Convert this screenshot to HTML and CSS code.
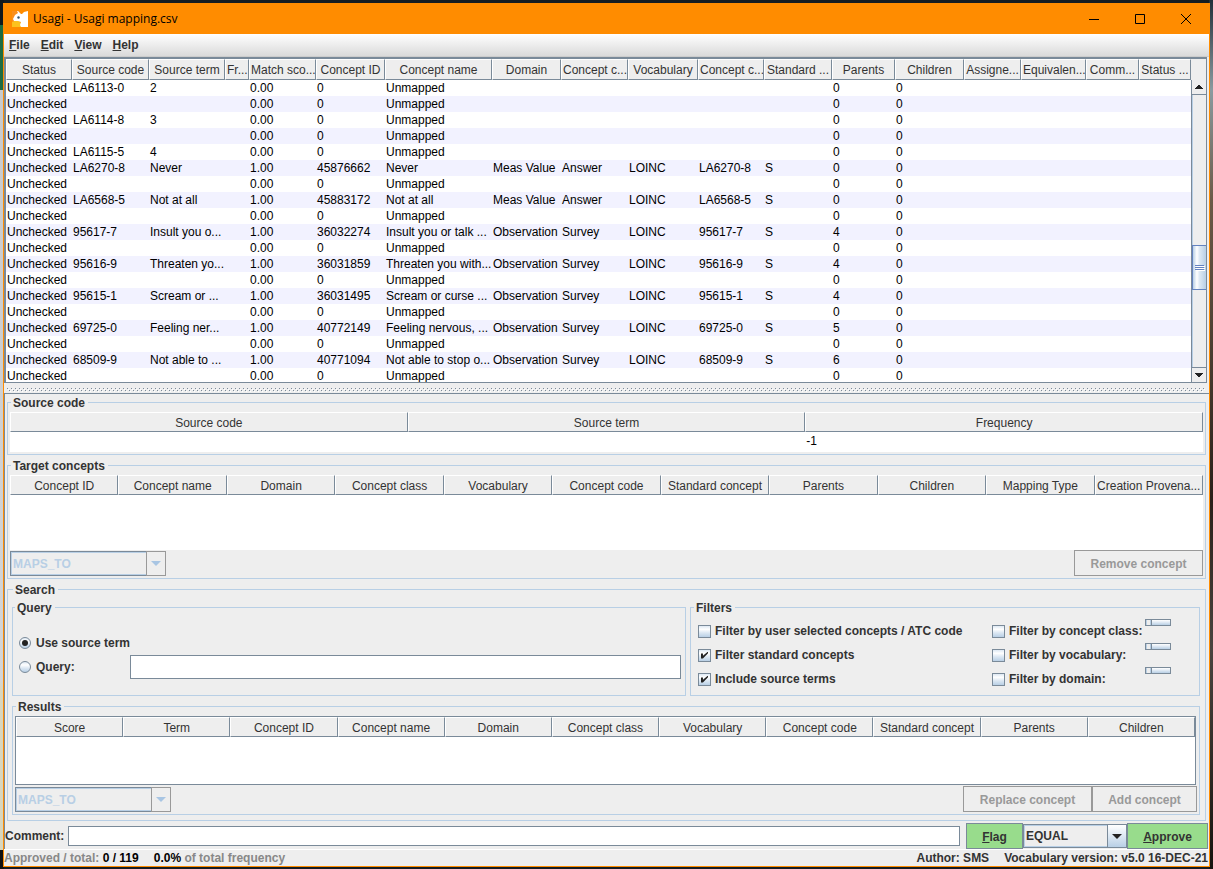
FILE: index.html
```html
<!DOCTYPE html>
<html lang="en">
<head>
    <meta charset="UTF-8">
    <meta name="viewport" content="width=device-width, initial-scale=1.0">
    <title>Usagi - Usagi mapping.csv</title>
    <link rel="stylesheet" href="styles.css">
</head>
<body>

<div class="window">
    <header class="titlebar">
        <svg class="logo" width="16" height="16" viewBox="0 0 16 16">
            <path d="M0 0h7l3 4v12H0z" fill="#f98f1c"/>
            <path d="M0 11l5-2 4 3 1 4H0z" fill="#fcc21e"/>
            <path d="M5 0l1 0 3 3 1 0 2-2 4-1v16H9l-1-2 1-3-3-1-4 0-1-2 2-4 3-2z" fill="#fff"/>
            <circle cx="6.5" cy="6.5" r="1.2" fill="#35566e"/>
        </svg>
        <h1>Usagi - Usagi mapping.csv</h1>
        <div class="window-buttons">
            <button aria-label="Minimize"><svg width="10" height="10" viewBox="0 0 10 10"><path d="M0 5.5h10"/></svg></button>
            <button aria-label="Maximize"><svg width="10" height="10" viewBox="0 0 10 10"><path d="M.5.5h9v9h-9z"/></svg></button>
            <button aria-label="Close"><svg width="10" height="10" viewBox="0 0 10 10"><path d="M0 0l10 10M10 0L0 10"/></svg></button>
        </div>
    </header>

    <nav class="menubar">
        <button><u>F</u>ile</button>
        <button><u>E</u>dit</button>
        <button><u>V</u>iew</button>
        <button><u>H</u>elp</button>
    </nav>

    <div class="overview">
        <table class="codes">
            <thead>
                <tr>
                    <th>Status</th><th>Source code</th><th>Source term</th><th>Fr...</th><th>Match sco...</th><th>Concept ID</th>
                    <th>Concept name</th><th>Domain</th><th>Concept c...</th><th>Vocabulary</th><th>Concept c...</th><th>Standard ...</th>
                    <th>Parents</th><th>Children</th><th>Assigne...</th><th>Equivalen...</th><th>Comm...</th><th>Status ...</th>
                </tr>
            </thead>
            <tbody>
                <tr><td>Unchecked</td><td>LA6113-0</td><td>2</td><td></td><td>0.00</td><td>0</td><td>Unmapped</td><td></td><td></td><td></td><td></td><td></td><td>0</td><td>0</td><td colspan="4"></td></tr>
                <tr><td>Unchecked</td><td></td><td></td><td></td><td>0.00</td><td>0</td><td>Unmapped</td><td></td><td></td><td></td><td></td><td></td><td>0</td><td>0</td><td colspan="4"></td></tr>
                <tr><td>Unchecked</td><td>LA6114-8</td><td>3</td><td></td><td>0.00</td><td>0</td><td>Unmapped</td><td></td><td></td><td></td><td></td><td></td><td>0</td><td>0</td><td colspan="4"></td></tr>
                <tr><td>Unchecked</td><td></td><td></td><td></td><td>0.00</td><td>0</td><td>Unmapped</td><td></td><td></td><td></td><td></td><td></td><td>0</td><td>0</td><td colspan="4"></td></tr>
                <tr><td>Unchecked</td><td>LA6115-5</td><td>4</td><td></td><td>0.00</td><td>0</td><td>Unmapped</td><td></td><td></td><td></td><td></td><td></td><td>0</td><td>0</td><td colspan="4"></td></tr>
                <tr><td>Unchecked</td><td>LA6270-8</td><td>Never</td><td></td><td>1.00</td><td>45876662</td><td>Never</td><td>Meas Value</td><td>Answer</td><td>LOINC</td><td>LA6270-8</td><td>S</td><td>0</td><td>0</td><td colspan="4"></td></tr>
                <tr><td>Unchecked</td><td></td><td></td><td></td><td>0.00</td><td>0</td><td>Unmapped</td><td></td><td></td><td></td><td></td><td></td><td>0</td><td>0</td><td colspan="4"></td></tr>
                <tr><td>Unchecked</td><td>LA6568-5</td><td>Not at all</td><td></td><td>1.00</td><td>45883172</td><td>Not at all</td><td>Meas Value</td><td>Answer</td><td>LOINC</td><td>LA6568-5</td><td>S</td><td>0</td><td>0</td><td colspan="4"></td></tr>
                <tr><td>Unchecked</td><td></td><td></td><td></td><td>0.00</td><td>0</td><td>Unmapped</td><td></td><td></td><td></td><td></td><td></td><td>0</td><td>0</td><td colspan="4"></td></tr>
                <tr><td>Unchecked</td><td>95617-7</td><td>Insult you o...</td><td></td><td>1.00</td><td>36032274</td><td>Insult you or talk ...</td><td>Observation</td><td>Survey</td><td>LOINC</td><td>95617-7</td><td>S</td><td>4</td><td>0</td><td colspan="4"></td></tr>
                <tr><td>Unchecked</td><td></td><td></td><td></td><td>0.00</td><td>0</td><td>Unmapped</td><td></td><td></td><td></td><td></td><td></td><td>0</td><td>0</td><td colspan="4"></td></tr>
                <tr><td>Unchecked</td><td>95616-9</td><td>Threaten yo...</td><td></td><td>1.00</td><td>36031859</td><td>Threaten you with...</td><td>Observation</td><td>Survey</td><td>LOINC</td><td>95616-9</td><td>S</td><td>4</td><td>0</td><td colspan="4"></td></tr>
                <tr><td>Unchecked</td><td></td><td></td><td></td><td>0.00</td><td>0</td><td>Unmapped</td><td></td><td></td><td></td><td></td><td></td><td>0</td><td>0</td><td colspan="4"></td></tr>
                <tr><td>Unchecked</td><td>95615-1</td><td>Scream or ...</td><td></td><td>1.00</td><td>36031495</td><td>Scream or curse ...</td><td>Observation</td><td>Survey</td><td>LOINC</td><td>95615-1</td><td>S</td><td>4</td><td>0</td><td colspan="4"></td></tr>
                <tr><td>Unchecked</td><td></td><td></td><td></td><td>0.00</td><td>0</td><td>Unmapped</td><td></td><td></td><td></td><td></td><td></td><td>0</td><td>0</td><td colspan="4"></td></tr>
                <tr><td>Unchecked</td><td>69725-0</td><td>Feeling ner...</td><td></td><td>1.00</td><td>40772149</td><td>Feeling nervous, ...</td><td>Observation</td><td>Survey</td><td>LOINC</td><td>69725-0</td><td>S</td><td>5</td><td>0</td><td colspan="4"></td></tr>
                <tr><td>Unchecked</td><td></td><td></td><td></td><td>0.00</td><td>0</td><td>Unmapped</td><td></td><td></td><td></td><td></td><td></td><td>0</td><td>0</td><td colspan="4"></td></tr>
                <tr><td>Unchecked</td><td>68509-9</td><td>Not able to ...</td><td></td><td>1.00</td><td>40771094</td><td>Not able to stop o...</td><td>Observation</td><td>Survey</td><td>LOINC</td><td>68509-9</td><td>S</td><td>6</td><td>0</td><td colspan="4"></td></tr>
                <tr><td>Unchecked</td><td></td><td></td><td></td><td>0.00</td><td>0</td><td>Unmapped</td><td></td><td></td><td></td><td></td><td></td><td>0</td><td>0</td><td colspan="4"></td></tr>
            </tbody>
        </table>
        <div class="scroll-column">
            <div class="corner"></div>
            <div class="scrollbar">
                <button aria-label="Scroll up"><svg width="8" height="4" viewBox="0 0 8 4"><path d="M3 0h2v1h1v1h1v1h1v1H0V3h1V2h1V1h1z" fill="#222"/></svg></button>
                <div class="track-above"></div>
                <div class="thumb"><svg width="10" height="6" viewBox="0 0 10 6"><path d="M0 .5h9M0 2.5h9M0 4.5h9" stroke="#6382bf"/><path d="M1 1.5h9M1 3.5h9M1 5.5h9" stroke="#fff"/></svg></div>
                <div class="track-below"></div>
                <button aria-label="Scroll down"><svg width="8" height="4" viewBox="0 0 8 4"><path d="M0 0h8v1H7v1H6v1H5v1H3V3H2V2H1V1H0z" fill="#222"/></svg></button>
            </div>
        </div>
    </div>

    <div class="divider"></div>

    <main class="details">
        <fieldset>
            <legend>Source code</legend>
            <table class="source">
                <thead>
                    <tr><th>Source code</th><th>Source term</th><th>Frequency</th></tr>
                </thead>
                <tbody>
                    <tr><td></td><td></td><td>-1</td></tr>
                </tbody>
            </table>
        </fieldset>

        <fieldset>
            <legend>Target concepts</legend>
            <div class="target-list">
                <table>
                    <thead>
                        <tr>
                            <th>Concept ID</th><th>Concept name</th><th>Domain</th><th>Concept class</th><th>Vocabulary</th><th>Concept code</th>
                            <th>Standard concept</th><th>Parents</th><th>Children</th><th>Mapping Type</th><th>Creation Provena...</th>
                        </tr>
                    </thead>
                </table>
            </div>
            <div class="actions">
                <div class="combo disabled">
                    <select aria-label="Target mapping type" disabled><option>MAPS_TO</option></select>
                    <span class="arrow"><svg width="10" height="5" viewBox="0 0 10 5"><path d="M0 0h10L5 5z"/></svg></span>
                </div>
                <button class="action" disabled>Remove concept</button>
            </div>
        </fieldset>

        <fieldset class="search">
            <legend>Search</legend>
            <div class="search-top">
                <fieldset class="query">
                    <legend>Query</legend>
                    <label><input type="radio" name="query" checked>Use source term</label>
                    <div class="query-row">
                        <label><input type="radio" name="query">Query:</label>
                        <input type="text" class="text" aria-label="Query">
                    </div>
                </fieldset>
                <fieldset class="filters">
                    <legend>Filters</legend>
                    <label><input type="checkbox">Filter by user selected concepts / ATC code</label>
                    <label><input type="checkbox">Filter by concept class:</label>
                    <select class="mini" aria-label="Concept class"></select>
                    <label><input type="checkbox" checked>Filter standard concepts</label>
                    <label><input type="checkbox">Filter by vocabulary:</label>
                    <select class="mini" aria-label="Vocabulary"></select>
                    <label><input type="checkbox" checked>Include source terms</label>
                    <label><input type="checkbox">Filter by domain:</label>
                    <select class="mini" aria-label="Domain"></select>
                </fieldset>
            </div>
            <fieldset class="results">
                <legend>Results</legend>
                <div class="result-list">
                    <table>
                        <thead>
                            <tr>
                                <th>Score</th><th>Term</th><th>Concept ID</th><th>Concept name</th><th>Domain</th><th>Concept class</th>
                                <th>Vocabulary</th><th>Concept code</th><th>Standard concept</th><th>Parents</th><th>Children</th>
                            </tr>
                        </thead>
                    </table>
                </div>
                <div class="actions">
                    <div class="combo disabled">
                        <select aria-label="Result mapping type" disabled><option>MAPS_TO</option></select>
                        <span class="arrow"><svg width="10" height="5" viewBox="0 0 10 5"><path d="M0 0h10L5 5z"/></svg></span>
                    </div>
                    <button class="action" disabled>Replace concept</button>
                    <button class="action add" disabled>Add concept</button>
                </div>
            </fieldset>
        </fieldset>

        <div class="comment-row">
            <label for="comment">Comment:</label>
            <input type="text" class="text" id="comment">
            <button class="green flag"><u>F</u>lag</button>
            <div class="combo equivalence">
                <select aria-label="Equivalence"><option>EQUAL</option></select>
                <span class="arrow"><svg width="10" height="5" viewBox="0 0 10 5"><path d="M0 0h10L5 5z"/></svg></span>
            </div>
            <button class="green approve"><u>A</u>pprove</button>
        </div>
    </main>

    <footer class="status">
        <span>Approved / total: <b>0 / 119</b></span>
        <span class="frequency"><b>0.0%</b> of total frequency</span>
        <span class="info">Author: SMS</span>
        <span class="info">Vocabulary version: v5.0 16-DEC-21</span>
    </footer>
</div>

</body>
</html>
```
FILE: styles.css
```css
* {
    box-sizing: border-box;
}
body {
    margin: 0;
    height: 100vh;
    padding: 3px 3px 2px;
    font: bold 12px/16px "Liberation Sans", Arial, sans-serif;
    color: #333;
    background: linear-gradient(#10181c 25px, #1d6b40 25px, #1d6b40 90px, #c9cacb 90px, #d4d5d6 680px, #d9d6bd 690px, #d9d6bd 850px, #111 850px) left / 4px 100% no-repeat, linear-gradient(#22303a, #8a9aa0 90px, #6b5a48 200px, #2a211b 500px, #4a4440 650px, #16140f) right / 4px 100% no-repeat, #151d22;
}
button, input, select {
    font: inherit;
    color: inherit;
    margin: 0;
}
.window {
    height: 100%;
    display: flex;
    flex-direction: column;
    background: #eee;
    border: 1px solid #ff8c00;
    border-top: 0;
}

/* title bar and menu */
.titlebar {
    display: flex;
    align-items: center;
    height: 31px;
    flex: none;
    padding-left: 8px;
    background: #ff8c00;
    color: #000;
}
.titlebar h1 {
    margin: 0 0 0 5px;
    font: 12px/16px "Open Sans", sans-serif;
}
.window-buttons {
    display: flex;
    margin-left: auto;
}
.window-buttons button {
    width: 46px;
    height: 31px;
    padding: 0;
    border: 0;
    background: none;
}
.window-buttons svg {
    fill: none;
    stroke: #000;
    display: block;
    margin: auto;
}
.menubar {
    display: flex;
    gap: 1px;
    height: 23px;
    flex: none;
    background: linear-gradient(#fff, #dadada);
    border-bottom: 1px solid #ccc;
}
.menubar button {
    padding: 0 5px;
    border: 0;
    background: none;
}

/* tables */
table {
    width: 100%;
    border-spacing: 0;
    table-layout: fixed;
    font-weight: normal;
}
th, td {
    padding: 0 1px;
    overflow: hidden;
    white-space: nowrap;
}
th {
    height: 20px;
    font-weight: normal;
    background: #eee;
    border: 1px solid #7a8a99;
    border-top-color: #fff;
    border-left-color: #fff;
}
td {
    height: 16px;
    color: #000;
    text-align: left;
}
.details th {
    padding-top: 2px;
}
.overview {
    display: flex;
    flex: 1;
    min-height: 0;
    overflow: hidden;
    margin-right: 2px;
    border: 1px solid #7a8a99;
    border-top-width: 2px;
    border-left-width: 2px;
    background: #fff;
}
.codes {
    flex: 1;
    align-self: flex-start;
}
.codes th {
    height: 21px;
}
.codes tbody tr:nth-child(even) {
    background: #f2f2ff;
}
.codes th:nth-child(1) { width: 66px; }
.codes th:nth-child(2) { width: 77px; }
.codes th:nth-child(3) { width: 76px; }
.codes th:nth-child(4) { width: 24px; }
.codes th:nth-child(5) { width: 67px; }
.codes th:nth-child(6) { width: 69px; }
.codes th:nth-child(7) { width: 107px; }
.codes th:nth-child(8) { width: 69px; }
.codes th:nth-child(9) { width: 67px; }
.codes th:nth-child(10) { width: 70px; }
.codes th:nth-child(11) { width: 66px; }
.codes th:nth-child(12) { width: 68px; }
.codes th:nth-child(13) { width: 63px; }
.codes th:nth-child(14) { width: 69px; }
.codes th:nth-child(15) { width: 57px; }
.codes th:nth-child(16) { width: 65px; }
.codes th:nth-child(17) { width: 53px; }
.codes th:nth-child(18) { width: 52px; }

/* scrollbar */
.scroll-column {
    display: flex;
    flex-direction: column;
    width: 15px;
}
.corner {
    height: 21px;
    background: #eee;
}
.scrollbar {
    flex: 1;
    display: flex;
    flex-direction: column;
    background: #eee;
    border-left: 1px solid #7a8a99;
}
.scrollbar button {
    height: 15px;
    padding: 0;
    background: #eee;
    border: 0;
    border-bottom: 1px solid #7a8a99;
}
.scrollbar button:last-child {
    border-top: 1px solid #7a8a99;
    border-bottom: 0;
}
.scrollbar button svg {
    display: block;
    margin: auto;
}
.track-above {
    flex: 151;
    border-left: 1px solid #b8cfe5;
}
.thumb {
    flex: 43;
    display: flex;
    align-items: center;
    justify-content: center;
    border: 1px solid #6382bf;
    border-right: 0;
    background: linear-gradient(90deg, #b8cfe5, #fff 30%, #dde8f3 50%, #b8cfe5);
}
.track-below {
    flex: 77;
    border-left: 1px solid #b8cfe5;
}

/* bumps on the split pane divider */
.divider {
    height: 10px;
    flex: none;
    margin: 0 4px 0 3px;
    background:
        linear-gradient(90deg, #7a8a99 1px, transparent 1px) 0 5px / 4px 1px repeat-x,
        linear-gradient(90deg, #7a8a99 1px, transparent 1px) 2px 7px / 4px 1px repeat-x,
        linear-gradient(90deg, #fff 1px, transparent 1px) 1px 6px / 4px 1px repeat-x,
        linear-gradient(90deg, #fff 1px, transparent 1px) 3px 8px / 4px 1px repeat-x;
}

/* lower pane */
.details {
    flex: none;
    display: flex;
    flex-direction: column;
    gap: 2px;
    border-top: 1px solid #7a8a99;
    border-left: 1px solid #7a8a99;
}
fieldset {
    min-width: 0;
    margin: 0;
    padding: 2px;
    border: 1px solid #b8cfe5;
}
.details > fieldset {
    margin: 0 3px 0 2px;
}
legend {
    height: 16px;
    margin-left: 1px;
    padding: 1px 3px 0 2px;
}
.source {
    background: #fff;
}
.source td {
    height: 20px;
    padding-top: 1px;
    vertical-align: top;
}
.target-list {
    height: 75px;
    background: #fff;
}
.actions {
    display: flex;
    height: 26px;
}
.action {
    width: 129px;
    padding: 1px 0 0;
    color: #999;
    background: #eee;
    border: 1px solid #999;
}
.actions .combo {
    margin: 1px auto 0 0;
    height: 25px;
    width: 156px;
}
.action.add {
    width: 105px;
}
.combo {
    position: relative;
}
.combo select {
    display: block;
    width: 100%;
    height: 100%;
    padding: 0 2px;
    appearance: none;
    border: 1px solid #7a8a99;
    border-radius: 0;
    background: #eee;
    box-shadow: inset 0 0 0 1px #b8cfe5;
    opacity: 1;
}
.combo .arrow {
    position: absolute;
    top: 0;
    right: 0;
    bottom: 0;
    width: 20px;
    display: flex;
    align-items: center;
    justify-content: center;
    border: 1px solid #7a8a99;
    background: linear-gradient(#fff, #dde8f3 50%, #b8cfe5);
    pointer-events: none;
}
.arrow svg {
    fill: #222;
}
.disabled select {
    color: #b8cfe5;
}
.disabled .arrow {
    border-color: #999;
    background: #eee;
}
.disabled .arrow svg {
    fill: #a8c5e3;
}

/* search */
.search {
    padding: 2px 5px 5px 4px;
}
.search-top {
    display: grid;
    grid-template-columns: 674fr 510fr;
    gap: 4px;
    margin-bottom: 2px;
}
.search-top label {
    display: flex;
    align-items: center;
    gap: 5px;
    height: 24px;
}
.search-top legend {
    margin-left: -4px;
}
.query {
    padding: 16px 4px 16px 6px;
}
.query-row {
    display: grid;
    grid-template-columns: 111px 1fr;
}
.filters {
    display: grid;
    grid-template-columns: 294fr 153fr 54fr;
    padding: 4px 0 4px 7px;
}
.search-top .filters label {
    gap: 4px;
}
.text {
    width: 100%;
    padding: 0 3px;
    border: 1px solid #7a8a99;
    background: #fff;
    font-weight: normal;
}
input[type="radio"], input[type="checkbox"] {
    appearance: none;
    flex: none;
    display: grid;
    place-items: center;
    width: 12px;
    height: 12px;
    border: 1px solid #7a8a99;
    background: linear-gradient(#dde8f3, #fff 30%, #dde8f3 60%, #b8cfe5);
}
input[type="radio"] {
    border-radius: 50%;
}
input[type="checkbox"] {
    width: 13px;
    height: 13px;
}
input[type="radio"]:checked::before {
    content: "";
    width: 6px;
    height: 6px;
    border-radius: 50%;
    background: #222;
}
input[type="checkbox"]:checked::before {
    content: "";
    width: 7px;
    height: 7px;
    background: #222;
    clip-path: polygon(0 30%, 28% 30%, 28% 62%, 100% 0, 100% 25%, 28% 100%, 0 100%);
}
.mini {
    appearance: none;
    width: 26px;
    height: 7px;
    padding: 0;
    border: 1px solid #7a8a99;
    border-radius: 0;
    background: linear-gradient(90deg, #b8cfe5 1px, #eee 1px, #eee 4px, #b8cfe5 4px, #b8cfe5 5px, #7a8a99 5px, #7a8a99 6px, transparent 6px), linear-gradient(#fff, #dde8f3 50%, #b8cfe5);
}
.results {
    padding-right: 2px;
}
.result-list {
    height: 69px;
    margin: 0 1px 1px 0;
    border: 1px solid #7a8a99;
    background: #fff;
}

/* comment and approval */
.comment-row {
    display: flex;
    align-items: center;
    height: 26px;
    padding-right: 1px;
}
.comment-row .text {
    flex: 1;
    height: 20px;
    margin: 0 6px 0 4px;
}
.green {
    height: 26px;
    padding: 1px 0 0;
    border: 1px solid #7a8a99;
    background: #98dc8c;
}
.flag {
    width: 57px;
}
.approve {
    width: 81px;
}
.equivalence {
    width: 104px;
    height: 24px;
}
.status {
    display: flex;
    flex: none;
    height: 17px;
    padding: 1px 1px 0 0;
    border-top: 1px solid #fff;
    line-height: 15px;
    color: #888;
}
.status b {
    color: #000;
}
.frequency {
    margin: 0 auto 0 15px;
}
.info {
    margin-left: 15px;
    color: #333;
}
```
